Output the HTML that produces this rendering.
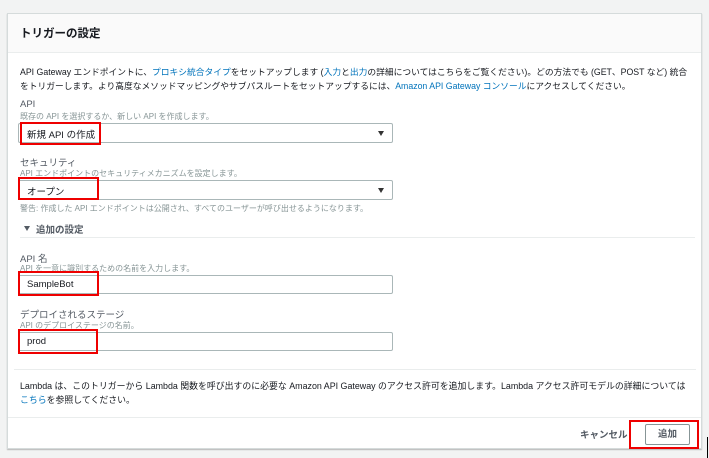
<!DOCTYPE html>
<html><head><meta charset="utf-8"><style>
*{margin:0;padding:0;box-sizing:border-box}
body{width:709px;height:458px;background:#f2f3f3;position:relative;overflow:hidden;font-family:"Liberation Sans","Noto Sans CJK JP",sans-serif;color:#16191f}
.card{position:absolute;left:7px;top:13px;width:695px;height:436px;background:#fff;border:1px solid #d5dbdb;box-shadow:0 1px 1px rgba(0,0,0,.25)}
.hd{position:absolute;left:0;top:0;right:0;height:39px;background:#fafafa;border-bottom:1px solid #eaeded}
.a{position:absolute;white-space:nowrap}
.t{font-size:11.5px;font-weight:bold}
.p{font-size:8.9px;color:#16191f}
.l{font-size:9.5px;color:#545b64}
.d{font-size:8px;color:#879596}
.b{color:#0073bb}
.box{position:absolute;border:1px solid #aab7b8;background:#fff;border-radius:2px}
.red{position:absolute;border:2px solid #e00;}
.v{font-size:9.5px;color:#16191f}
.tri{position:absolute;width:0;height:0;border-left:3.5px solid transparent;border-right:3.5px solid transparent;border-top:5px solid #333}
.sep{position:absolute;height:1px;background:#eaeded}
</style></head><body>
<div class="card">
<div class="hd"></div>
</div>
<div class="a t" style="left:20px;top:25px">トリガーの設定</div>
<div class="a p" style="left:20px;top:65px;font-size:8.75px">API Gateway エンドポイントに、<span class="b">プロキシ統合タイプ</span>をセットアップします (<span class="b">入力</span>と<span class="b">出力</span>の詳細についてはこちらをご覧ください)。どの方法でも (GET、POST など) 統合</div>
<div class="a p" style="left:20px;top:79px;font-size:8.75px">をトリガーします。より高度なメソッドマッピングやサブパスルートをセットアップするには、<span class="b">Amazon API Gateway コンソール</span>にアクセスしてください。</div>

<div class="a l" style="left:20px;top:99px">API</div>
<div class="a d" style="left:20px;top:111px">既存の API を選択するか、新しい API を作成します。</div>
<div class="box" style="left:18px;top:123px;width:375px;height:20px"></div>
<div class="tri" style="left:378px;top:131px"></div>
<div class="a v" style="left:27px;top:127px">新規 API の作成</div>
<div class="red" style="left:20px;top:122px;width:81px;height:23px"></div>

<div class="a l" style="left:20px;top:155px">セキュリティ</div>
<div class="a d" style="left:20px;top:168px">API エンドポイントのセキュリティメカニズムを設定します。</div>
<div class="box" style="left:18px;top:180px;width:375px;height:20px"></div>
<div class="tri" style="left:378px;top:188px"></div>
<div class="a v" style="left:27px;top:184px">オープン</div>
<div class="red" style="left:18px;top:177px;width:81px;height:23px"></div>
<div class="a d" style="left:20px;top:203px">警告: 作成した API エンドポイントは公開され、すべてのユーザーが呼び出せるようになります。</div>

<div class="tri" style="left:24px;top:226px;border-width:5px 3.5px 0 3.5px;border-top-color:#545b64"></div>
<div class="a l" style="left:36px;top:222px;font-weight:bold;color:#545b64">追加の設定</div>
<div class="sep" style="left:20px;top:237px;width:675px"></div>

<div class="a l" style="left:20px;top:251px">API 名</div>
<div class="a d" style="left:20px;top:263px">API を一意に識別するための名前を入力します。</div>
<div class="box" style="left:18px;top:275px;width:375px;height:19px"></div>
<div class="a v" style="left:27px;top:279px">SampleBot</div>
<div class="red" style="left:18px;top:271px;width:81px;height:25px"></div>

<div class="a l" style="left:20px;top:307px">デプロイされるステージ</div>
<div class="a d" style="left:20px;top:320px">API のデプロイステージの名前。</div>
<div class="box" style="left:18px;top:332px;width:375px;height:19px"></div>
<div class="a v" style="left:27px;top:336px">prod</div>
<div class="red" style="left:18px;top:329px;width:80px;height:25px"></div>

<div class="sep" style="left:14px;top:369px;width:682px"></div>
<div class="a p" style="left:20px;top:379px">Lambda は、このトリガーから Lambda 関数を呼び出すのに必要な Amazon API Gateway のアクセス許可を追加します。Lambda アクセス許可モデルの詳細については</div>
<div class="a p" style="left:20px;top:393px"><span class="b">こちら</span>を参照してください。</div>
<div class="sep" style="left:8px;top:417px;width:693px"></div>

<div class="a" style="left:580px;top:427px;font-size:9.5px;font-weight:bold;color:#545b64">キャンセル</div>
<div style="position:absolute;left:645px;top:424px;width:45px;height:21px;border:1px solid #879596;border-radius:2px;background:#fff;font-size:9.5px;font-weight:bold;color:#545b64;text-align:center;line-height:19px">追加</div>
<div class="red" style="left:629px;top:420px;width:70px;height:29px"></div>
<div style="position:absolute;left:707px;top:437px;width:1px;height:21px;background:#000"></div>
</body></html>
